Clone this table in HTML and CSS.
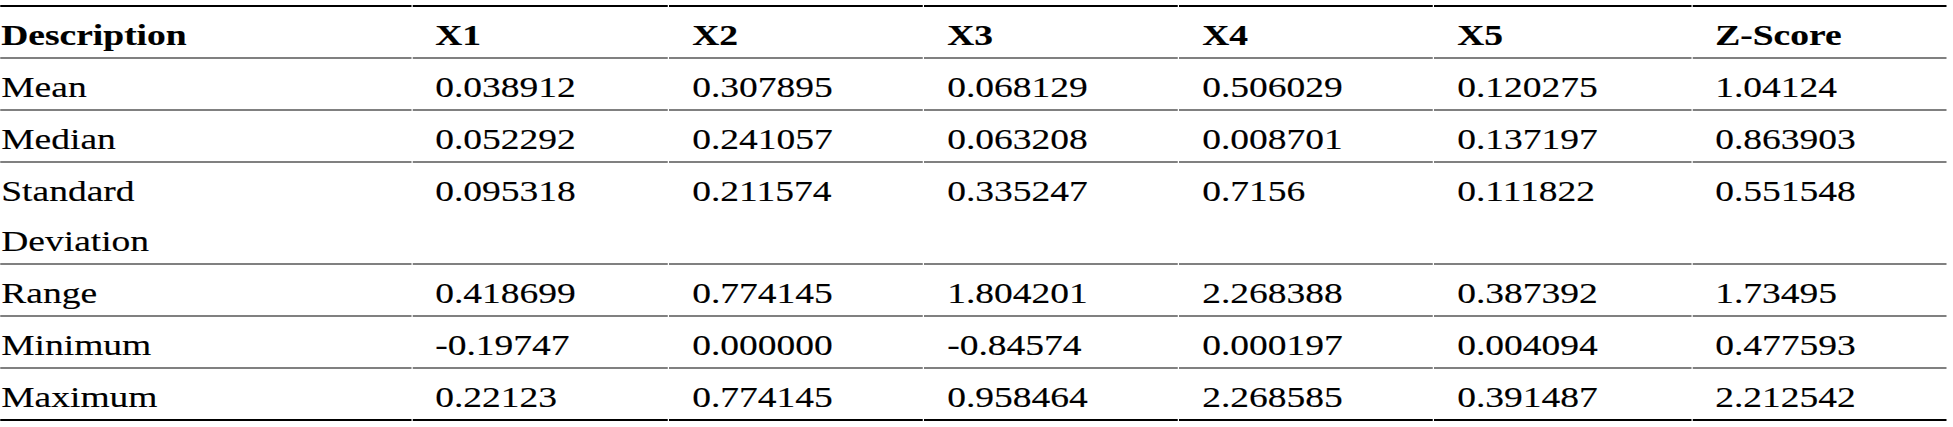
FILE: index.html
```html
<!DOCTYPE html>
<html>
  <head>
    <meta charset="UTF-8" />
    <meta name="viewport" content="width=device-width, initial-scale=1.0" />
    <title>Descriptive Statistics</title>
    <link rel="stylesheet" href="styles.css">
  </head>

  <body>
    <table class="stats">
      <colgroup>
        <col class="col-desc" />
        <col class="col-x1" />
        <col class="col-num" />
        <col class="col-num" />
        <col class="col-num" />
        <col class="col-x5" />
        <col class="col-num" />
      </colgroup>
      <thead>
        <tr>
          <th><span>Description</span></th>
          <th><span>X1</span></th>
          <th><span>X2</span></th>
          <th><span>X3</span></th>
          <th><span>X4</span></th>
          <th><span>X5</span></th>
          <th><span>Z-Score</span></th>
        </tr>
      </thead>
      <tbody>
        <tr>
          <td><span>Mean</span></td>
          <td><span>0.038912</span></td>
          <td><span>0.307895</span></td>
          <td><span>0.068129</span></td>
          <td><span>0.506029</span></td>
          <td><span>0.120275</span></td>
          <td><span>1.04124</span></td>
        </tr>
        <tr>
          <td><span>Median</span></td>
          <td><span>0.052292</span></td>
          <td><span>0.241057</span></td>
          <td><span>0.063208</span></td>
          <td><span>0.008701</span></td>
          <td><span>0.137197</span></td>
          <td><span>0.863903</span></td>
        </tr>
        <tr>
          <td><span>Standard<br />Deviation</span></td>
          <td><span>0.095318</span></td>
          <td><span>0.211574</span></td>
          <td><span>0.335247</span></td>
          <td><span>0.7156</span></td>
          <td><span>0.111822</span></td>
          <td><span>0.551548</span></td>
        </tr>
        <tr>
          <td><span>Range</span></td>
          <td><span>0.418699</span></td>
          <td><span>0.774145</span></td>
          <td><span>1.804201</span></td>
          <td><span>2.268388</span></td>
          <td><span>0.387392</span></td>
          <td><span>1.73495</span></td>
        </tr>
        <tr>
          <td><span>Minimum</span></td>
          <td><span>-0.19747</span></td>
          <td><span>0.000000</span></td>
          <td><span>-0.84574</span></td>
          <td><span>0.000197</span></td>
          <td><span>0.004094</span></td>
          <td><span>0.477593</span></td>
        </tr>
        <tr>
          <td><span>Maximum</span></td>
          <td><span>0.22123</span></td>
          <td><span>0.774145</span></td>
          <td><span>0.958464</span></td>
          <td><span>2.268585</span></td>
          <td><span>0.391487</span></td>
          <td><span>2.212542</span></td>
        </tr>
      </tbody>
    </table>
  </body>
</html>
```

FILE: styles.css
```css
body {
  margin: 0;
  background-color: #fff;
  font-family: "Liberation Serif", "Times New Roman", serif;
  color: #000;
}

/* the source table is set in Times, stretched wide */
.stats {
  width: 1558.6px;
  margin: 5px 0 0 -1px;
  table-layout: fixed;
  border-collapse: separate;
  border-spacing: 1px 0;
  transform: scaleX(1.25);
  transform-origin: 0 0;
  font-size: 30px;
}

.col-desc {
  width: 328.6px;
}

.col-x1 {
  width: 204.6px;
}

.col-num {
  width: 203px;
}

.col-x5 {
  width: 205.4px;
}

.stats th,
.stats td {
  padding: 0 0 0 18.4px;
  line-height: 50px;
  text-align: left;
  vertical-align: top;
  white-space: nowrap;
  border-bottom: 2px solid #808080;
  -webkit-text-stroke: 0.15px #000;
}

.stats th {
  font-weight: bold;
  border-top: 2px solid #000;
}

.stats th:first-child,
.stats td:first-child {
  padding-left: 0.8px;
}

.stats tbody tr:last-child td {
  border-bottom: 2px solid #000;
}

.stats span {
  vertical-align: -3px;
  line-height: 40px;
}
```
